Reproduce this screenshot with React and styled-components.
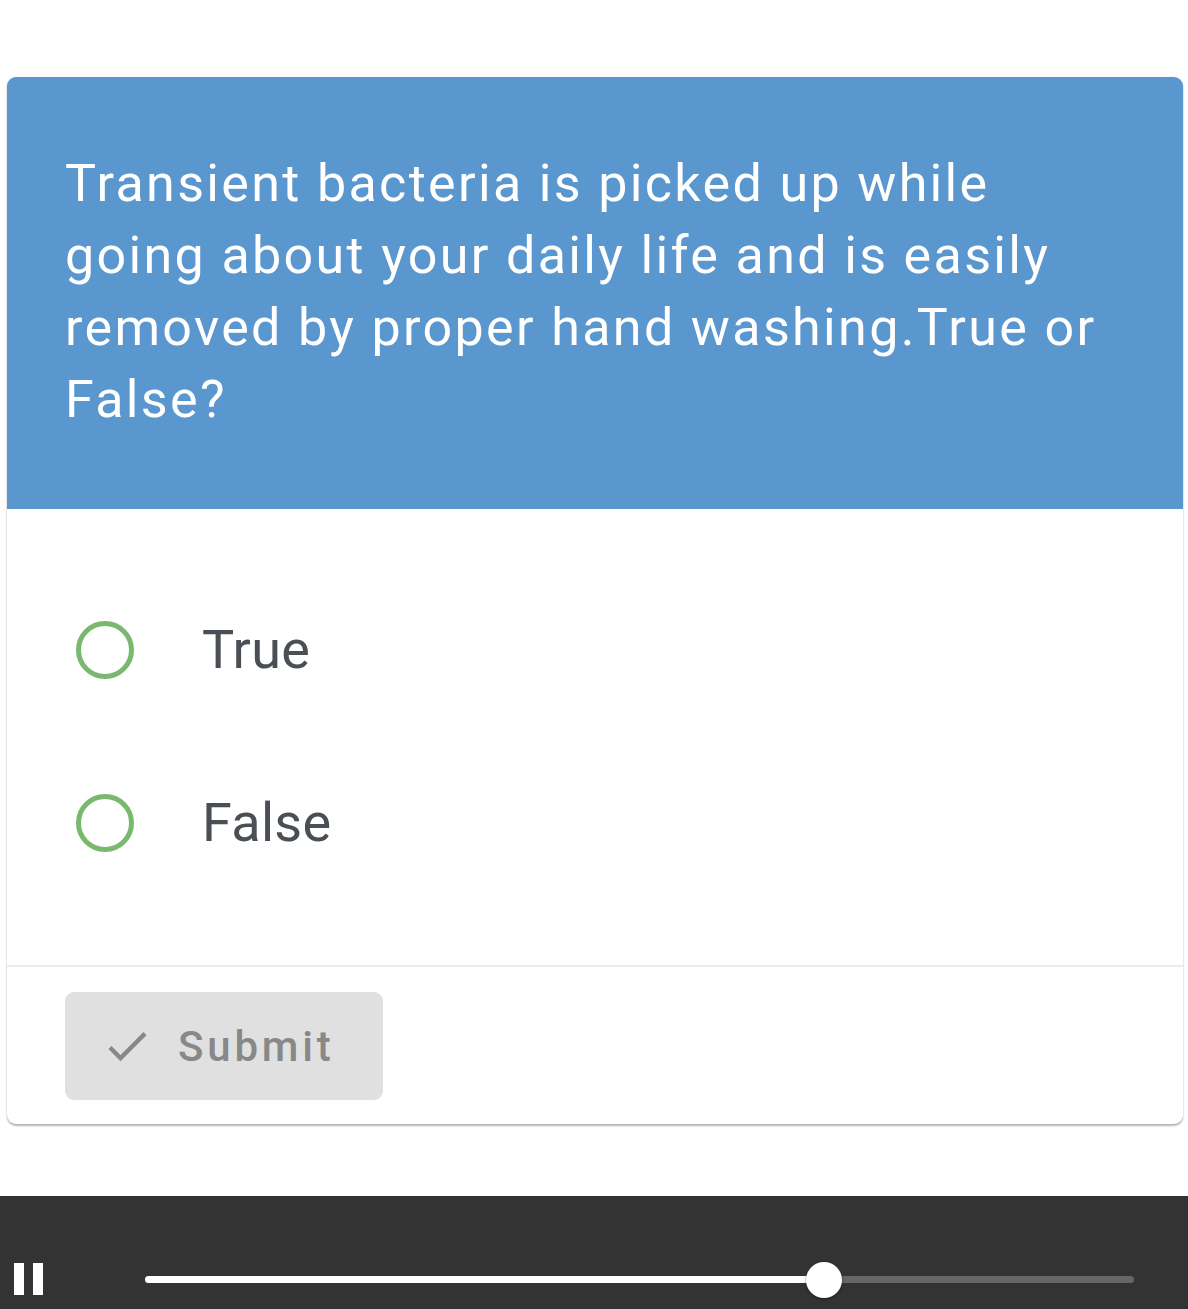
import React from 'react'
import styled, { createGlobalStyle } from 'styled-components'
import { MdCheck } from 'react-icons/md'

const GlobalStyle = createGlobalStyle`
  *, *::before, *::after {
    box-sizing: border-box;
  }
  html, body {
    margin: 0;
    padding: 0;
    background: #fff;
    font-family: Roboto, "Liberation Sans", sans-serif;
  }
`;

const Page = styled.div`
  width: 1188px;
  height: 1309px;
  display: flex;
  flex-direction: column;
  overflow: hidden;
`;

const Content = styled.div`
  flex: 1;
  padding: 77px 5px 0 7px;
`;

const Card = styled.div`
  background: #fff;
  border-radius: 9px;
  overflow: hidden;
  box-shadow: 0 2px 2px rgba(0, 0, 0, 0.28), 0 0 2px rgba(0, 0, 0, 0.1);
`;

const Question = styled.div`
  background: #5a97cf;
  color: #fff;
  padding: 71px 60px 73px 58px;
  font-size: 52px;
  line-height: 72px;
  letter-spacing: 2.35px;
`;

const Options = styled.div`
  padding: 54px 0 56px;
  border-bottom: 2px solid #ececec;
`;

const Option = styled.label`
  display: flex;
  align-items: center;
  height: 173px;
  padding-left: 69px;
  cursor: pointer;
`;

const Radio = styled.span`
  width: 58px;
  height: 58px;
  border: 5.5px solid #7ab86f;
  border-radius: 50%;
  flex-shrink: 0;
`;

const OptionText = styled.span`
  margin-left: 68px;
  font-size: 54px;
  color: #494f55;
  letter-spacing: 0.3px;
`;

const Footer = styled.div`
  padding: 25px 58px 24px;
`;

const SubmitButton = styled.button`
  display: flex;
  align-items: center;
  gap: 25px;
  width: 318px;
  height: 108px;
  padding: 0 0 0 36px;
  border: none;
  border-radius: 9px;
  background: #e0e0e0;
  color: #888;
  font-family: Roboto, "Liberation Sans", sans-serif;
  font-size: 42px;
  font-weight: 500;
  letter-spacing: 3.8px;
`;

const PlayerBar = styled.div`
  height: 113px;
  background: #333;
  display: flex;
  align-items: flex-end;
  padding: 0 54px 13px 14px;
`;

const PauseButton = styled.div`
  display: flex;
  gap: 9px;
  height: 32px;
  width: 131px;
  margin-bottom: 1px;
`;

const PauseBar = styled.span`
  width: 10px;
  height: 32px;
  background: #fff;
`;

const Track = styled.div`
  flex: 1;
  height: 7px;
  border-radius: 4px;
  background: #666;
  position: relative;
  margin-bottom: 13px;
`;

const Fill = styled.div`
  height: 100%;
  border-radius: 4px;
  background: #fff;
`;

const Thumb = styled.div`
  position: absolute;
  top: 50%;
  width: 36px;
  height: 36px;
  border-radius: 50%;
  background: #fff;
  transform: translate(-50%, -50%);
  box-shadow: 0 1px 3px rgba(0, 0, 0, 0.45);
`;

const progress = 68.66;

export default function App() {
  return (
    <Page>
      <GlobalStyle />
      <Content>
        <Card>
          <Question>
            Transient bacteria is picked up while going about your daily life and is easily removed by
            proper hand washing.True or False?
          </Question>
          <Options>
            <Option>
              <Radio />
              <OptionText>True</OptionText>
            </Option>
            <Option>
              <Radio />
              <OptionText>False</OptionText>
            </Option>
          </Options>
          <Footer>
            <SubmitButton>
              <MdCheck size={52} color="#888" />
              Submit
            </SubmitButton>
          </Footer>
        </Card>
      </Content>
      <PlayerBar>
        <PauseButton>
          <PauseBar />
          <PauseBar />
        </PauseButton>
        <Track>
          <Fill style={{ width: `${progress}%` }} />
          <Thumb style={{ left: `${progress}%` }} />
        </Track>
      </PlayerBar>
    </Page>
  );
}
